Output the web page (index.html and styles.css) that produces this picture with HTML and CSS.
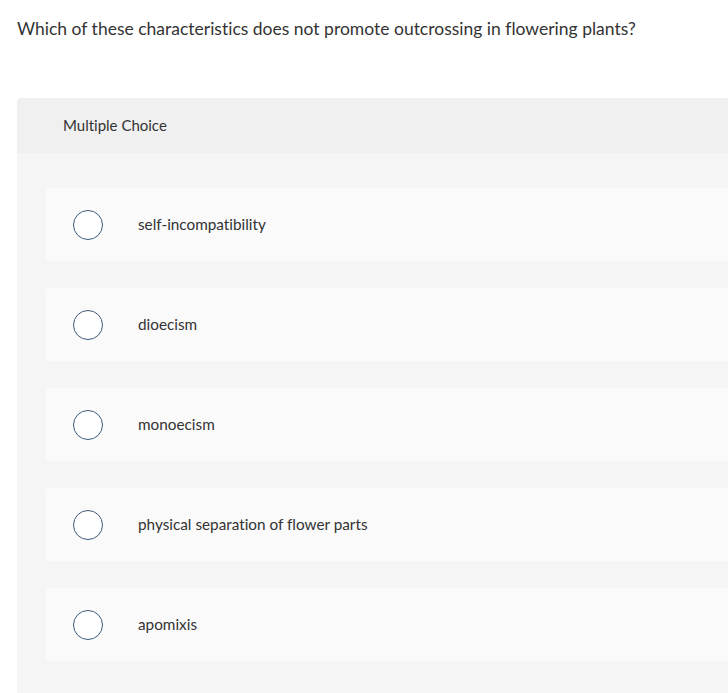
FILE: index.html
```html
<!DOCTYPE html>
<html>
<head>
<meta charset="utf-8">
<link rel="stylesheet" href="styles.css">
</head>
<body>
<div class="page">
  <p class="question">Which of these characteristics does not promote outcrossing in flowering plants?</p>
  <section class="panel">
    <header class="panel-head">Multiple Choice</header>
    <div class="panel-body">
      <label class="option"><span class="radio"></span><span class="opt-text">self-incompatibility</span></label>
      <label class="option"><span class="radio"></span><span class="opt-text">dioecism</span></label>
      <label class="option"><span class="radio"></span><span class="opt-text">monoecism</span></label>
      <label class="option"><span class="radio"></span><span class="opt-text">physical separation of flower parts</span></label>
      <label class="option"><span class="radio"></span><span class="opt-text">apomixis</span></label>
    </div>
  </section>
</div>
</body>
</html>
```
FILE: styles.css
```css
html, body {
  margin: 0;
  padding: 0;
  background: #fff;
  overflow: hidden;
}
.page {
  width: 728px;
  box-sizing: border-box;
  padding: 0 0 0 17px;
  font-family: "Lato", "Open Sans", sans-serif;
  font-variant-ligatures: none;
  color: #333;
}
.question {
  margin: 0;
  padding-top: 18px;
  font-size: 17.5px;
  line-height: 22px;
  color: #333;
}
.panel {
  margin-top: 58px;
  border-radius: 4px 0 0 0;
  overflow: hidden;
}
.panel-head {
  background: #f0f0f0;
  height: 55px;
  display: flex;
  align-items: center;
  padding-left: 46px;
  padding-bottom: 1px;
  box-sizing: border-box;
  font-size: 15px;
  color: #333;
}
.panel-body {
  background: #f5f5f5;
  padding: 35px 0 40px 29px;
  display: flex;
  flex-direction: column;
  gap: 27px;
}
.option {
  background: #fafafa;
  height: 73px;
  border-radius: 4px 0 0 4px;
  display: flex;
  align-items: center;
  padding-left: 27px;
  padding-bottom: 1px;
  box-sizing: border-box;
}
.radio {
  width: 28px;
  height: 28px;
  border: 1.5px solid #3d5a75;
  border-radius: 50%;
  background: #fff;
  flex: none;
  margin-top: 1px;
}
.opt-text {
  margin-left: 35px;
  font-size: 15.3px;
  color: #333;
}
```
